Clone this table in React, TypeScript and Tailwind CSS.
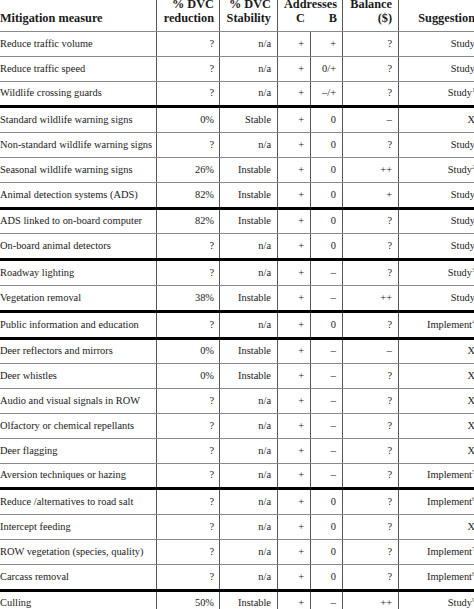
import React from "react";

type Row = {
  m: string;
  r: string;
  s: string;
  c: string;
  b: string;
  bal: string;
  sug: string;
  sup?: string;
  thick?: boolean;
};

const rows: Row[] = [
  { m: "Reduce traffic volume", r: "?", s: "n/a", c: "+", b: "+", bal: "?", sug: "Study" },
  { m: "Reduce traffic speed", r: "?", s: "n/a", c: "+", b: "0/+", bal: "?", sug: "Study" },
  { m: "Wildlife crossing guards", r: "?", s: "n/a", c: "+", b: "\u2013/+", bal: "?", sug: "Study", sup: "1", thick: true },
  { m: "Standard wildlife warning signs", r: "0%", s: "Stable", c: "+", b: "0", bal: "\u2013", sug: "X" },
  { m: "Non-standard wildlife warning signs", r: "?", s: "n/a", c: "+", b: "0", bal: "?", sug: "Study" },
  { m: "Seasonal wildlife warning signs", r: "26%", s: "Instable", c: "+", b: "0", bal: "++", sug: "Study", sup: "2" },
  { m: "Animal detection systems (ADS)", r: "82%", s: "Instable", c: "+", b: "0", bal: "+", sug: "Study", thick: true },
  { m: "ADS linked to on-board computer", r: "82%", s: "Instable", c: "+", b: "0", bal: "?", sug: "Study" },
  { m: "On-board animal detectors", r: "?", s: "n/a", c: "+", b: "0", bal: "?", sug: "Study", thick: true },
  { m: "Roadway lighting", r: "?", s: "n/a", c: "+", b: "\u2013", bal: "?", sug: "Study", sup: "3" },
  { m: "Vegetation removal", r: "38%", s: "Instable", c: "+", b: "\u2013", bal: "++", sug: "Study", thick: true },
  { m: "Public information and education", r: "?", s: "n/a", c: "+", b: "0", bal: "?", sug: "Implement", sup: "4", thick: true },
  { m: "Deer reflectors and mirrors", r: "0%", s: "Instable", c: "+", b: "\u2013", bal: "\u2013", sug: "X" },
  { m: "Deer whistles", r: "0%", s: "Instable", c: "+", b: "\u2013", bal: "?", sug: "X" },
  { m: "Audio and visual signals in ROW", r: "?", s: "n/a", c: "+", b: "\u2013", bal: "?", sug: "X" },
  { m: "Olfactory or chemical repellants", r: "?", s: "n/a", c: "+", b: "\u2013", bal: "?", sug: "X" },
  { m: "Deer flagging", r: "?", s: "n/a", c: "+", b: "\u2013", bal: "?", sug: "X" },
  { m: "Aversion techniques or hazing", r: "?", s: "n/a", c: "+", b: "\u2013", bal: "?", sug: "Implement", sup: "5", thick: true },
  { m: "Reduce /alternatives to road salt", r: "?", s: "n/a", c: "+", b: "0", bal: "?", sug: "Implement", sup: "6" },
  { m: "Intercept feeding", r: "?", s: "n/a", c: "+", b: "0", bal: "?", sug: "X" },
  { m: "ROW vegetation (species, quality)", r: "?", s: "n/a", c: "+", b: "0", bal: "?", sug: "Implement", sup: "7" },
  { m: "Carcass removal", r: "?", s: "n/a", c: "+", b: "0", bal: "?", sug: "Implement", sup: "8", thick: true },
  { m: "Culling", r: "50%", s: "Instable", c: "+", b: "\u2013", bal: "++", sug: "Study", sup: "9" },
];

const cell = "flex items-center justify-end pr-[6px] border-r border-[#555] whitespace-nowrap";

export default function App() {
  return (
    <div className="w-[474px] h-[609px] overflow-hidden bg-white text-[#1a1a1a] font-['Liberation_Serif','Times_New_Roman',serif]">
      <div className="w-[481px] -mt-[5px]">
        {/* Header */}
        <div className="grid grid-cols-[157px_63px_58px_65px_56px_82px] h-[37px] border-b border-[#8a8a8a] text-[12.3px] font-bold leading-[14px]">
          <div className="flex flex-col justify-end pb-[6px] border-r border-[#555] whitespace-nowrap">
            <span>Mitigation measure</span>
          </div>
          <div className="flex flex-col justify-end items-end pb-[6px] pr-[5px] border-r border-[#555] whitespace-nowrap">
            <span>% DVC</span>
            <span>reduction</span>
          </div>
          <div className="flex flex-col justify-end items-end pb-[6px] pr-[6px] border-r border-[#555] whitespace-nowrap">
            <span>% DVC</span>
            <span>Stability</span>
          </div>
          <div className="flex flex-col justify-end pb-[6px] border-r border-[#555] whitespace-nowrap">
            <span className="text-right pr-[5px]">Addresses</span>
            <div className="grid grid-cols-[33px_32px]">
              <span className="text-right pr-[6px]">C</span>
              <span className="text-right pr-[6px]">B</span>
            </div>
          </div>
          <div className="flex flex-col justify-end items-end pb-[6px] pr-[6px] border-r border-[#555] whitespace-nowrap">
            <span>Balance</span>
            <span>($)</span>
          </div>
          <div className="flex flex-col justify-end items-end pb-[6px] pr-[6px] whitespace-nowrap">
            <span>Suggestion</span>
          </div>
        </div>

        {/* Body */}
        {rows.map((row, i) => (
          <div
            key={i}
            className={
              "grid grid-cols-[157px_63px_58px_33px_32px_56px_82px] text-[10.4px] leading-[12px] " +
              (row.thick ? "h-[26.8px] border-b-[3px] border-black" : "h-[24.8px] border-b border-[#8a8a8a]")
            }
          >
            <div className="flex items-center border-r border-[#555] whitespace-nowrap">{row.m}</div>
            <div className="flex items-center justify-end pr-[5px] border-r border-[#555] whitespace-nowrap">{row.r}</div>
            <div className={cell}>{row.s}</div>
            <div className={cell}>{row.c}</div>
            <div className={cell}>{row.b}</div>
            <div className={cell}>{row.bal}</div>
            <div className="flex items-center justify-end pr-[6px] whitespace-nowrap">
              <span>
                {row.sug}
                {row.sup && <sup className="text-[6px] -top-[4px] text-[#555]">{row.sup}</sup>}
              </span>
            </div>
          </div>
        ))}
      </div>
    </div>
  );
}
